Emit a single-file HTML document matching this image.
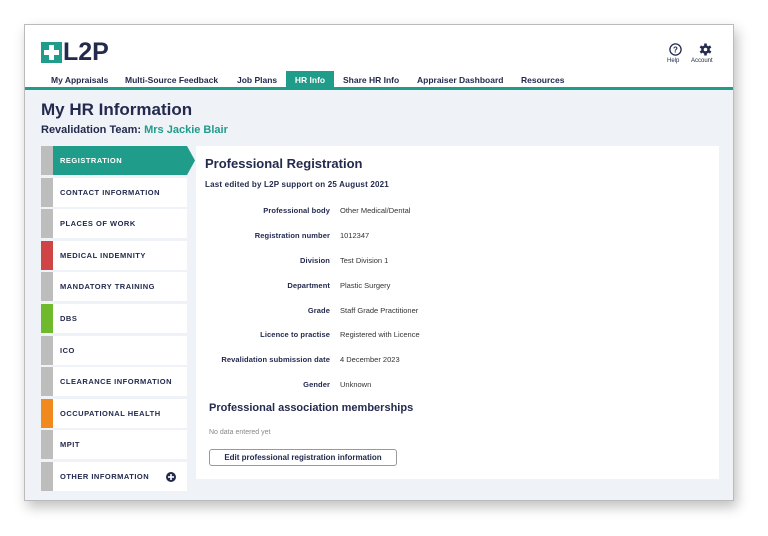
<!DOCTYPE html>
<html><head><style>
*{margin:0;padding:0;box-sizing:border-box}
body{width:768px;height:536px;background:#fff;font-family:"Liberation Sans",sans-serif;position:relative;overflow:hidden;color:#232a4e}
.win{position:absolute;left:24px;top:24px;width:710px;height:477px;border:1px solid #bbb;background:#eff2f6;box-shadow:3px 6px 12px rgba(0,0,0,.25)}
.hdr{position:absolute;left:0;top:0;width:708px;height:65px;background:#fff;border-bottom:3px solid #1f9c8a}
.abs{position:absolute}
.nav{position:absolute;top:50px;font-size:8.5px;font-weight:bold;color:#232a4e}
.tab{position:absolute;left:261px;top:46px;width:48px;height:19px;background:#1f9c8a;color:#fff;font-size:8.5px;font-weight:bold;text-align:center;line-height:19px}
.side{position:absolute;left:16px;width:146px;height:29px;background:#fff;font-size:7.5px;font-weight:bold;color:#232a4e;letter-spacing:.5px}
.side i{position:absolute;left:0;top:0;width:12px;height:29px;background:#bdbdbd}
.side span{position:absolute;left:19px;top:10px}
.lab{position:absolute;right:403px;font-size:7.5px;font-weight:bold;color:#232a4e;text-align:right;white-space:nowrap;letter-spacing:.1px}
.val{position:absolute;left:315px;font-size:7.5px;color:#333;white-space:nowrap}
</style></head><body>
<div class="win">
<div class="hdr">
 <div class="abs" style="left:16px;top:17px;width:21px;height:21px;background:#1f9c8a"></div>
 <div class="abs" style="left:24px;top:20px;width:5px;height:15px;background:#fff"></div>
 <div class="abs" style="left:19px;top:25px;width:15px;height:5px;background:#fff"></div>
 <div class="abs" style="left:38px;top:14px;font-size:25px;line-height:26px;font-weight:bold;color:#232a4e;letter-spacing:0">L2P</div>
 <div class="nav" style="left:26px">My Appraisals</div>
 <div class="nav" style="left:100px">Multi-Source Feedback</div>
 <div class="nav" style="left:212px">Job Plans</div>
 <div class="tab">HR Info</div>
 <div class="nav" style="left:318px">Share HR Info</div>
 <div class="nav" style="left:392px">Appraiser Dashboard</div>
 <div class="nav" style="left:496px">Resources</div>
 <svg class="abs" style="left:644px;top:18px" width="13" height="13" viewBox="0 0 13 13"><circle cx="6.5" cy="6.5" r="5.6" fill="none" stroke="#232a4e" stroke-width="1.3"/><text x="6.5" y="9.5" font-size="8" font-weight="bold" text-anchor="middle" fill="#232a4e" font-family="Liberation Sans">?</text></svg>
 <div class="abs" style="left:642px;top:33px;font-size:6px;color:#232a4e">Help</div>
 <svg class="abs" style="left:674px;top:18px" width="13" height="13" viewBox="0 0 13 13"><g fill="#232a4e"><circle cx="6.5" cy="6.5" r="4.3"/><rect x="5.2" y="0.5" width="2.6" height="12"/><rect x="5.2" y="0.5" width="2.6" height="12" transform="rotate(60 6.5 6.5)"/><rect x="5.2" y="0.5" width="2.6" height="12" transform="rotate(120 6.5 6.5)"/></g><circle cx="6.5" cy="6.5" r="1.8" fill="#fff"/></svg>
 <div class="abs" style="left:666px;top:33px;font-size:6px;color:#232a4e">Account</div>
</div>
<div class="abs" style="left:16px;top:75px;font-size:17px;font-weight:bold;color:#232a4e">My HR Information</div>
<div class="abs" style="left:16px;top:99px;font-size:11px;font-weight:bold;color:#232a4e">Revalidation Team: <span style="color:#1f9c8a">Mrs Jackie Blair</span></div>

<div class="side" style="top:121px;background:transparent"><i></i><svg class="abs" style="left:12px;top:0" width="143" height="29"><polygon points="0,0 134,0 142,14.5 134,29 0,29" fill="#1f9c8a"/></svg><span style="color:#fff">REGISTRATION</span></div>
<div class="side" style="top:153px"><i></i><span>CONTACT INFORMATION</span></div>
<div class="side" style="top:184px"><i></i><span>PLACES OF WORK</span></div>
<div class="side" style="top:216px"><i style="background:#cf4444"></i><span>MEDICAL INDEMNITY</span></div>
<div class="side" style="top:247px"><i></i><span>MANDATORY TRAINING</span></div>
<div class="side" style="top:279px"><i style="background:#6fba2c"></i><span>DBS</span></div>
<div class="side" style="top:311px"><i></i><span>ICO</span></div>
<div class="side" style="top:342px"><i></i><span>CLEARANCE INFORMATION</span></div>
<div class="side" style="top:374px"><i style="background:#f0891e"></i><span>OCCUPATIONAL HEALTH</span></div>
<div class="side" style="top:405px"><i></i><span>MPIT</span></div>
<div class="side" style="top:437px"><i></i><span>OTHER INFORMATION</span><svg class="abs" style="left:125px;top:10px" width="10" height="10"><circle cx="5" cy="5" r="5" fill="#232a4e"/><rect x="4.2" y="2" width="1.6" height="6" fill="#fff"/><rect x="2" y="4.2" width="6" height="1.6" fill="#fff"/></svg></div>

<div class="abs" style="left:171px;top:121px;width:523px;height:333px;background:#fff"></div>
<div class="abs" style="left:180px;top:131px;font-size:13px;font-weight:bold;color:#232a4e">Professional Registration</div>
<div class="abs" style="left:180px;top:155px;font-size:8px;font-weight:bold;color:#232a4e;letter-spacing:.2px">Last edited by L2P support on 25 August 2021</div>
<div class="lab" style="top:181px">Professional body</div><div class="val" style="top:181px">Other Medical/Dental</div>
<div class="lab" style="top:206px">Registration number</div><div class="val" style="top:206px">1012347</div>
<div class="lab" style="top:231px">Division</div><div class="val" style="top:231px">Test Division 1</div>
<div class="lab" style="top:256px">Department</div><div class="val" style="top:256px">Plastic Surgery</div>
<div class="lab" style="top:281px">Grade</div><div class="val" style="top:281px">Staff Grade Practitioner</div>
<div class="lab" style="top:305px">Licence to practise</div><div class="val" style="top:305px">Registered with Licence</div>
<div class="lab" style="top:330px">Revalidation submission date</div><div class="val" style="top:330px">4 December 2023</div>
<div class="lab" style="top:355px">Gender</div><div class="val" style="top:355px">Unknown</div>
<div class="abs" style="left:184px;top:377px;font-size:11px;font-weight:bold;color:#232a4e">Professional association memberships</div>
<div class="abs" style="left:184px;top:404px;font-size:7px;color:#888">No data entered yet</div>
<div class="abs" style="left:184px;top:424px;width:188px;height:17px;border:1px solid #999;border-radius:3px;font-size:8px;font-weight:bold;color:#232a4e;text-align:center;line-height:15px">Edit professional registration information</div>
</div>
</body></html>
